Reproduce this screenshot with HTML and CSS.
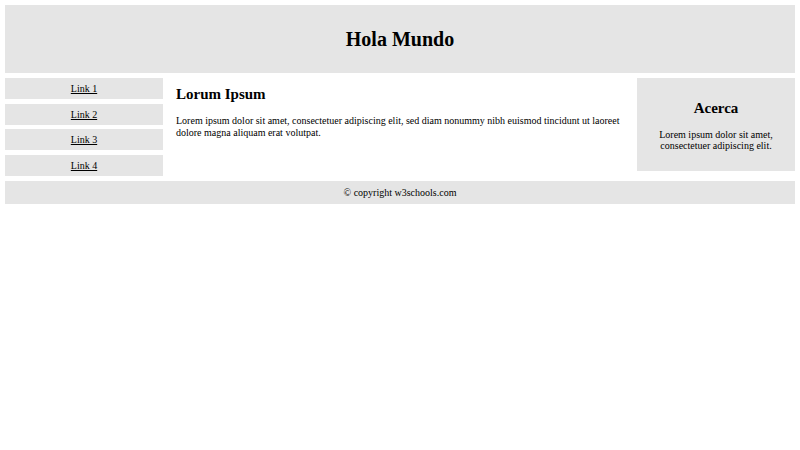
FILE: index.html
```html
<!DOCTYPE html>
<html lang="es">
<head>
<meta charset="utf-8">
<title>Hola Mundo</title>
<link rel="stylesheet" href="styles.css">
</head>
<body>
<div class="page">
  <header class="header"><h1 class="title">Hola Mundo</h1></header>
  <nav class="nav">
    <a class="nav-link" href="#">Link 1</a>
    <a class="nav-link" href="#">Link 2</a>
    <a class="nav-link" href="#">Link 3</a>
    <a class="nav-link" href="#">Link 4</a>
  </nav>
  <main class="main">
    <h2 class="main-title">Lorum Ipsum</h2>
    <p class="main-text">Lorem ipsum dolor sit amet, consectetuer adipiscing elit, sed diam nonummy nibh euismod tincidunt ut laoreet dolore magna aliquam erat volutpat.</p>
  </main>
  <aside class="aside">
    <h2 class="aside-title">Acerca</h2>
    <p class="aside-text">Lorem ipsum dolor sit amet, consectetuer adipiscing elit.</p>
  </aside>
  <footer class="footer">© copyright w3schools.com</footer>
</div>
</body>
</html>
```
FILE: styles.css
```css
html, body {
  margin: 0;
  padding: 0;
  background: #ffffff;
}
body {
  font-family: "Liberation Serif", "Times New Roman", serif;
  font-size: 10px;
  line-height: 11.5px;
  color: #000;
}
.page {
  padding: 5px;
  display: grid;
  grid-template-columns: 158px 1fr 158px;
  grid-template-rows: auto auto auto;
  column-gap: 5px;
  row-gap: 5px;
  align-items: start;
}
.header {
  grid-column: 1 / 4;
  background: #e5e5e5;
  height: 68px;
  display: flex;
  align-items: center;
  justify-content: center;
}
.title {
  margin: 0;
  font-size: 20px;
  line-height: 23px;
  font-weight: bold;
}
.nav {
  display: flex;
  flex-direction: column;
  gap: 4.67px;
}
.nav-link {
  display: block;
  height: 21px;
  line-height: 21px;
  background: #e5e5e5;
  text-align: center;
  color: #000;
  text-decoration: underline;
}
.main {
  padding: 8px 8px 0 8px;
}
.main-title {
  margin: 0 0 12px 0;
  font-size: 15px;
  line-height: 17px;
}
.main-text {
  margin: 0;
}
.aside {
  background: #e5e5e5;
  padding: 9px 9px 9px 9px;
  text-align: center;
}
.aside-title {
  margin: 12.5px 0 12px 0;
  font-size: 15px;
  line-height: 17px;
}
.aside-text {
  margin: 0 0 10px 0;
}
.footer {
  grid-column: 1 / 4;
  background: #e5e5e5;
  height: 23px;
  line-height: 23px;
  text-align: center;
}
```
